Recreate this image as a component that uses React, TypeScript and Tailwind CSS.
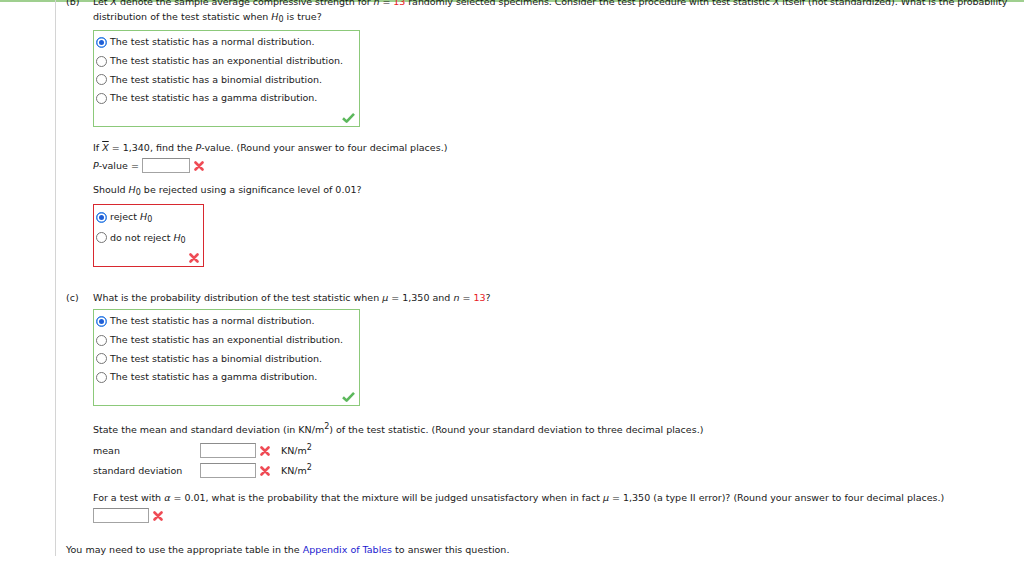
import React from "react";

type Option = { label: string; selected?: boolean };

const DIST_OPTIONS: Option[] = [
  { label: "The test statistic has a normal distribution.", selected: true },
  { label: "The test statistic has an exponential distribution." },
  { label: "The test statistic has a binomial distribution." },
  { label: "The test statistic has a gamma distribution." },
];

function Radio({ selected }: { selected?: boolean }) {
  return selected ? (
    <span className="inline-flex h-[11px] w-[11px] shrink-0 items-center justify-center rounded-full border border-[#2d7be5] bg-[#2d7be5]">
      <span className="h-[5px] w-[5px] rounded-full bg-[#1f5fd6] ring-[1.5px] ring-white" />
    </span>
  ) : (
    <span className="inline-block h-[11px] w-[11px] shrink-0 rounded-full border border-[#767676] bg-white" />
  );
}

function Check() {
  return (
    <svg width="13" height="11" viewBox="0 0 13 11">
      <path d="M1 6.2 L4.6 9.6 L12 1.8" fill="none" stroke="#5cb85c" strokeWidth="2.6" strokeLinejoin="round" />
    </svg>
  );
}

function Cross() {
  return (
    <svg width="10" height="10" viewBox="0 0 10 10">
      <path d="M1.5 1.5 L8.5 8.5 M8.5 1.5 L1.5 8.5" stroke="#ef4b55" strokeWidth="2.6" strokeLinecap="round" />
    </svg>
  );
}

function Input({ w = "w-[56px]" }: { w?: string }) {
  return <span className={`inline-block h-[15px] ${w} border border-[#a3a3a3] border-t-[#8c8c8c] bg-white`} />;
}

function H0() {
  return (
    <span>
      <i>H</i>
      <sub className="text-[8px]">0</sub>
    </span>
  );
}

function Xbar() {
  return <i className="overline">X</i>;
}

function Sq() {
  return <sup className="text-[8px]">2</sup>;
}

function RadioBox({ options, ok }: { options: Option[]; ok: boolean }) {
  return (
    <div className={`relative w-[267px] h-[97px] border pt-[2px] pl-[2px] ${ok ? "border-[#8cc97a]" : "border-[#d8282f]"}`}>
      {options.map((o) => (
        <div key={o.label} className="flex h-[18.7px] items-center gap-[3px]">
          <Radio selected={o.selected} />
          <span>{o.label}</span>
        </div>
      ))}
      <div className="absolute bottom-[3px] right-[4px]">{ok ? <Check /> : <Cross />}</div>
    </div>
  );
}

export default function App() {
  return (
    <div
      className="h-[563px] w-[1024px] overflow-hidden bg-white text-[9.5px] leading-[14px] text-[#1a1a1a]"
      style={{ fontFamily: '"DejaVu Sans", Verdana, sans-serif' }}
    >
      <div className="h-[2px] w-full bg-[#9fcf8f]" />
      <div className="ml-[55px] h-[561px] border-l border-[#d4d4d4] pl-[10px]">
        <div className="mt-[-7px] flex whitespace-nowrap">
          <span className="w-[27px] shrink-0">(b)</span>
          <div>
            <div className="tracking-[-0.055px]">
              Let <Xbar /> denote the sample average compressive strength for <i>n</i> ={" "}
              <span className="text-[#e8201e]">13</span> randomly selected specimens. Consider the test procedure with
              test statistic <Xbar /> itself (not standardized). What is the probability
            </div>
            <div className="mt-[1px]">
              distribution of the test statistic when <H0 /> is true?
            </div>

            <div className="mt-[6px]">
              <RadioBox options={DIST_OPTIONS} ok />
            </div>

            <div className="mt-[14px]">
              If <Xbar /> = 1,340, find the <i>P</i>-value. (Round your answer to four decimal places.)
            </div>
            <div className="mt-[3px] flex h-[15px] items-center">
              <span>
                <i>P</i>-value =&nbsp;
              </span>
              <Input w="w-[48px]" />
              <span className="ml-[4px] flex">
                <Cross />
              </span>
            </div>
            <div className="mt-[10px]">
              Should <H0 /> be rejected using a significance level of 0.01?
            </div>

            <div className="relative mt-[7px] h-[63px] w-[111px] border border-[#d8282f] pl-[2px] pt-[2px]">
              <div className="flex h-[20px] items-center gap-[3px]">
                <Radio selected />
                <span>
                  reject <H0 />
                </span>
              </div>
              <div className="flex h-[21px] items-center gap-[3px]">
                <Radio />
                <span>
                  do not reject <H0 />
                </span>
              </div>
              <div className="absolute bottom-[3px] right-[4px]">
                <Cross />
              </div>
            </div>
          </div>
        </div>

        <div className="mt-[24px] flex whitespace-nowrap">
          <span className="w-[27px] shrink-0">(c)</span>
          <div>
            <div>
              What is the probability distribution of the test statistic when <i>μ</i> = 1,350 and <i>n</i> ={" "}
              <span className="text-[#e8201e]">13</span>?
            </div>
            <div className="mt-[4px]">
              <RadioBox options={DIST_OPTIONS} ok />
            </div>

            <div className="mt-[17px]">
              State the mean and standard deviation (in KN/m<Sq />) of the test statistic. (Round your standard
              deviation to three decimal places.)
            </div>
            <div className="mt-[6px] flex h-[15px] items-center">
              <span className="w-[107px]">mean</span>
              <Input />
              <span className="ml-[4px] mr-[11px] flex">
                <Cross />
              </span>
              <span>
                KN/m<Sq />
              </span>
            </div>
            <div className="mt-[5px] flex h-[15px] items-center">
              <span className="w-[107px]">standard deviation</span>
              <Input />
              <span className="ml-[4px] mr-[11px] flex">
                <Cross />
              </span>
              <span>
                KN/m<Sq />
              </span>
            </div>

            <div className="mt-[13px]">
              For a test with <i>α</i> = 0.01, what is the probability that the mixture will be judged unsatisfactory
              when in fact <i>μ</i> = 1,350 (a type II error)? (Round your answer to four decimal places.)
            </div>
            <div className="mt-[3px] flex h-[15px] items-center">
              <Input />
              <span className="ml-[4px] flex">
                <Cross />
              </span>
            </div>
          </div>
        </div>

        <div className="mt-[20px] whitespace-nowrap">
          You may need to use the appropriate table in the{" "}
          <span className="text-[#1b1bd0]">Appendix of Tables</span> to answer this question.
        </div>
      </div>
    </div>
  );
}
